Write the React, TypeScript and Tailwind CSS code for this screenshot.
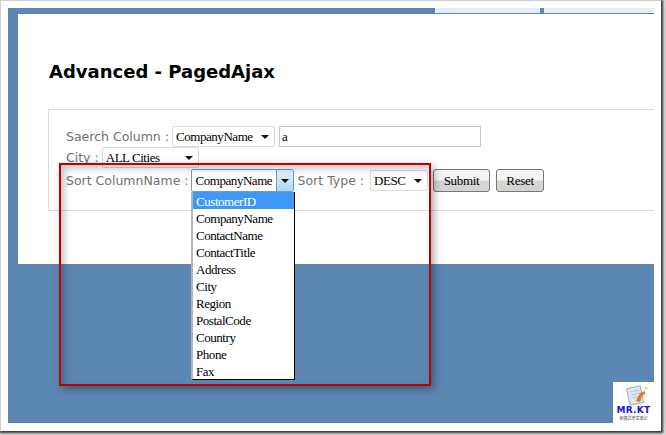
import React from "react";

const SANS = "font-['DejaVu_Sans','Liberation_Sans',sans-serif]";
const SERIF = "font-['Liberation_Serif','Noto_Sans_CJK_TC',serif]";

const SORT_COLUMNS = [
  "CustomerID",
  "CompanyName",
  "ContactName",
  "ContactTitle",
  "Address",
  "City",
  "Region",
  "PostalCode",
  "Country",
  "Phone",
  "Fax",
];

const Arrow: React.FC = () => (
  <svg width="8" height="4" viewBox="0 0 8 4" className="shrink-0">
    <path d="M0 0h8L4 4z" fill="#111" />
  </svg>
);

// Vista style select box, closed
const SelectBox: React.FC<{ value: string; width: string }> = ({ value, width }) => (
  <div
    className={`${width} ${SERIF} flex h-[21px] shrink-0 items-center justify-between rounded-[2px] border border-[#d5dbe2] bg-white pl-[3px] pr-[5px] text-[13px] tracking-[-0.45px] text-black`}
  >
    <span className="whitespace-nowrap">{value}</span>
    <Arrow />
  </div>
);

const Label: React.FC<{ children: React.ReactNode }> = ({ children }) => (
  <span className={`${SANS} shrink-0 whitespace-nowrap pt-[2px] text-[12.500px] text-[#6f6f6f]`}>{children}</span>
);

const Button: React.FC<{ children: React.ReactNode; width: string }> = ({ children, width }) => (
  <div
    className={`${width} ${SERIF} flex h-[23px] shrink-0 items-center justify-center rounded-[3px] border border-[#777] bg-gradient-to-b from-[#f4f4f4] from-45% to-[#d4d4d4] to-55% text-[13px] tracking-[-0.3px] text-black`}
  >
    {children}
  </div>
);

const Logo: React.FC = () => (
  <div className="absolute bottom-0 right-0 flex h-[41px] w-[41px] flex-col items-center bg-white">
    <svg width="24" height="21" viewBox="0 0 24 21" className="ml-[6px] mt-[3px]">
      <rect x="3" y="2" width="14" height="17" rx="1" transform="rotate(-12 10 10)" fill="#dfe6ee" stroke="#a9a9a9" />
      <path d="M6 7l8-2M7 10l8-2M8 13l8-2" stroke="#b9c4d0" strokeWidth="1" />
      <path d="M11 16l4-8 5-2v3l-3 2-2 6z" fill="#e9772b" />
      <circle cx="21" cy="3" r="1.500" fill="#f5d76e" />
    </svg>
    <span className={`${SANS} mt-[-1px] text-[9px] font-bold leading-[10px] tracking-[0.3px] text-[#1414f0]`}>MR.KT</span>
    <span className="mt-[1px] font-['Noto_Sans_CJK_TC',sans-serif] text-[4px] leading-[5px] text-[#555]">
      軟體式學習筆記
    </span>
  </div>
);

export default function App() {
  return (
    <div className="h-[435px] w-[666px] overflow-hidden bg-[#d6d6d6]">
      <div className="h-[431px] w-[661px] border-l-[1px] border-t-[1px] border-[#cfcfcf] bg-white pl-[7px] pr-[7px] pt-[7px] shadow-[1px_1px_2px_1px_rgba(0,0,0,0.75)]">
        <div className="relative flex h-[415px] w-[646px] flex-col bg-[#5d87b3]">
          {/* top tabs */}
          <div className="flex h-[6px] shrink-0 justify-end">
            <div className="mr-[4px] h-[5px] w-[105px] bg-[#e6ecf3]" />
            <div className="h-[5px] w-[110px] bg-[#e6ecf3]" />
          </div>

          <div className="ml-[10px] h-[250px] shrink-0 bg-white pl-[30px] pt-[47px]">
            <h1 className={`${SANS} pl-[1px] text-[18px] font-bold leading-[22px] text-black`}>Advanced - PagedAjax</h1>

            <div className="mt-[26px] h-[102px] border-y border-l border-[#dcdcdc] pl-[17px] pt-[16px]">
              <div className="flex h-[21px] items-center">
                <Label>Saerch Column :</Label>
                <span className="ml-[3px]">
                  <SelectBox value="CompanyName" width="w-[103px]" />
                </span>
                <div className={`${SERIF} ml-[4px] flex h-[21px] w-[202px] items-center border border-[#c8c8c8] pl-[2px] text-[13px]`}>
                  a
                </div>
              </div>
              <div className="flex h-[21px] items-center gap-[3px]">
                <Label>City :</Label>
                <SelectBox value="ALL Cities" width="w-[97px]" />
              </div>
              <div className="mt-[1px] flex h-[23px] items-center">
                <Label>Sort ColumnName :</Label>
                <div className="ml-[2px] flex h-[23px] w-[103px] shrink-0 items-stretch rounded-[2px] border border-[#6f9dc2] bg-white">
                  <span className={`${SERIF} flex-1 self-center whitespace-nowrap pl-[4px] text-[13px] tracking-[-0.45px] text-black`}>
                    CompanyName
                  </span>
                  <span className="flex w-[17px] items-center justify-center border-l border-[#6f9dc2] bg-gradient-to-b from-[#e3f3fc] to-[#a9d8f2]">
                    <Arrow />
                  </span>
                </div>
                <span className="ml-[4px] flex">
                  <Label>Sort Type :</Label>
                </span>
                <span className="ml-[6px]">
                  <SelectBox value="DESC" width="w-[58px]" />
                </span>
                <span className="ml-[5px]">
                  <Button width="w-[57px]">Submit</Button>
                </span>
                <span className="ml-[6px]">
                  <Button width="w-[48px]">Reset</Button>
                </span>
              </div>
            </div>
          </div>

          {/* open dropdown list */}
          <ul className={`${SERIF} absolute left-[183px] top-[184px] w-[104px] border-b border-r border-l-[2px] border-black border-l-[#b5b5b5] bg-white text-[13px] leading-[17px] tracking-[-0.45px] text-black`}>
            {SORT_COLUMNS.map((name, i) => (
              <li key={name} className={i === 0 ? "h-[17px] bg-[#3d97f5] pl-[3px] pt-[1px] text-white" : "h-[17px] pl-[3px] pt-[1px]"}>
                {name}
              </li>
            ))}
          </ul>

          {/* red callout drawn over the shot */}
          <div className="pointer-events-none absolute left-[51px] top-[155px] h-[223px] w-[372px] border-[2.500px] border-[#c00000] shadow-[3px_3px_8px_rgba(0,0,0,0.35),inset_4px_4px_7px_rgba(0,0,0,0.22)]" />

          <Logo />
        </div>
      </div>
    </div>
  );
}
